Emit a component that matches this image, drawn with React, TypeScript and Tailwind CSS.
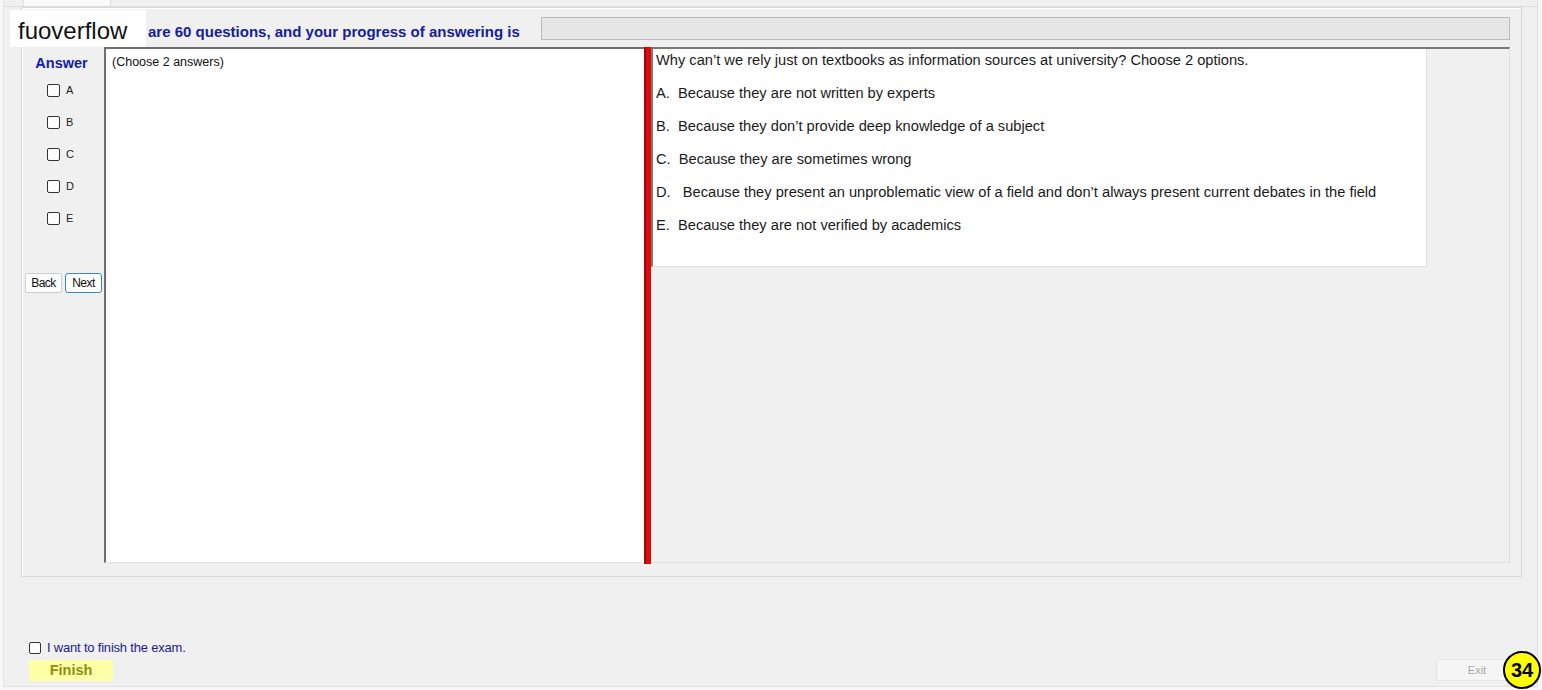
import React from 'react';

const options = [
  { key: 'A', text: 'A.  Because they are not written by experts' },
  { key: 'B', text: 'B.  Because they don\u2019t provide deep knowledge of a subject' },
  { key: 'C', text: 'C.  Because they are sometimes wrong' },
  { key: 'D', text: 'D.   Because they present an unproblematic view of a field and don\u2019t always present current debates in the field' },
  { key: 'E', text: 'E.  Because they are not verified by academics' },
];

const Box: React.FC<{ size?: string }> = ({ size = 'w-[13px] h-[13px]' }) => (
  <span className={`${size} inline-block shrink-0 rounded-[2px] border border-[#333] bg-white`} />
);

const App: React.FC = () => {
  return (
    <div className="relative w-[1542px] h-[690px] overflow-hidden bg-[#f7f7f7] font-['Liberation_Sans',Arial,sans-serif]">
      <div className="ml-[3px] w-[1535px] h-[687px] flex flex-col bg-[#f0f0f0] border-x border-b border-[#e2e2e2]">
        {/* tab strip */}
        <div className="h-[7px] flex border-b border-[#dcdcdc]">
          <div className="ml-[19px] w-[88px] h-[6px] bg-[#fafafa] border-x border-[#e0e0e0]" />
        </div>

        {/* group box */}
        <div className="ml-[17px] w-[1501px] h-[570px] flex flex-col border border-[#dadada] shadow-[inset_1px_1px_0_#fff]">
          <div className="mt-[9px] h-[23px] flex items-start pl-[81px] pr-[11px]">
            <span className="mt-[6px] text-[15px] leading-[17px] font-bold text-[#14209a] whitespace-nowrap">
              There are 60 questions, and your progress of answering is
            </span>
            <div className="flex-1" />
            <div className="w-[969px] h-[23px] bg-[#e6e6e6] border border-[#bcbcbc]" />
          </div>

          <div className="mt-[7px] h-[516px] flex pl-[1px]">
            {/* answer column */}
            <div className="w-[81px] flex flex-col bg-[#f0f0f0]">
              <div className="mt-[8px] pr-[4px] text-center text-[14.5px] font-bold text-[#1020a8] leading-[17px]">Answer</div>
              <div className="mt-[12px] flex flex-col gap-[19px] pl-[24px]">
                {options.map((o) => (
                  <label key={o.key} className="flex items-center gap-[6px] h-[13px] text-[11px] text-[#222]">
                    <Box />
                    <span>{o.key}</span>
                  </label>
                ))}
              </div>
              <div className="mt-[48px] flex gap-[3px] pl-[2px]">
                <button className="w-[37px] h-[20px] text-[12px] tracking-[-0.5px] text-[#111] bg-[#fdfdfd] border border-[#cfcfcf] rounded-[2px]">
                  Back
                </button>
                <button className="w-[37px] h-[20px] text-[12px] tracking-[-0.5px] text-[#111] bg-[#fdfdfd] border border-[#3d85c6] rounded-[3px]">
                  Next
                </button>
              </div>
            </div>

            {/* answer text area */}
            <div className="w-[540px] h-[516px] bg-white border-t-2 border-l-2 border-t-[#6e6e6e] border-l-[#6e6e6e] border-b border-b-[#e4e4e4]">
              <div className="pl-[6px] pt-[4px] text-[12.5px] text-[#111]">(Choose 2 answers)</div>
            </div>

            {/* splitter */}
            <div className="w-[7px] h-[517px] bg-[#e00a0a] border-l-2 border-[#9c0b0b]" />

            {/* question panel */}
            <div className="w-[859px] h-[516px] bg-[#f0f0f0] border-t-2 border-t-[#7a7a7a] border-r border-r-[#dcdcdc] border-b border-b-[#e2e2e2]">
              <div className="w-[776px] h-[218px] bg-white border-l-2 border-l-[#7a7a7a] border-r border-r-[#e0e0e0] border-b border-b-[#e0e0e0] pl-[3px]">
                <div className="text-[14.65px] leading-[17px] text-[#1a1a1a] pt-[3px]">
                  Why can&rsquo;t we rely just on textbooks as information sources at university? Choose 2 options.
                </div>
                {options.map((o) => (
                  <div key={o.key} className="mt-[16px] text-[14.65px] leading-[17px] text-[#1a1a1a] whitespace-pre">
                    {o.text}
                  </div>
                ))}
              </div>
            </div>
          </div>
        </div>

        {/* bottom area */}
        <div className="flex-1 flex items-end justify-between pl-[25px] pr-[19px] pb-[5px]">
          <div className="flex flex-col gap-[5px]">
            <label className="flex items-center gap-[6px] h-[14px] text-[13px] tracking-[-0.2px] text-[#1c1c8c]">
              <Box size="w-[12px] h-[12px]" />
              <span>I want to finish the exam.</span>
            </label>
            <button className="w-[84px] h-[21px] bg-[#ffffa8] text-[14.5px] font-bold text-[#8e8e12]">Finish</button>
          </div>
          <button className="w-[82px] h-[22px] bg-[#f5f5f5] border border-[#e6e6e6] text-[11px] text-[#a8a8a8]">Exit</button>
        </div>
      </div>

      {/* watermark label */}
      <div className="absolute left-[10px] top-[10px] w-[136px] h-[37px] bg-white flex items-center pl-[8px] pt-[4px] text-[24px] text-[#111]">
        fuoverflow
      </div>

      {/* page badge */}
      <div className="absolute left-[1503px] top-[651px] w-[38px] h-[38px] rounded-full bg-[#ffff00] border-2 border-black flex items-center justify-center text-[20px] font-bold text-black">
        34
      </div>
    </div>
  );
};

export default App;
